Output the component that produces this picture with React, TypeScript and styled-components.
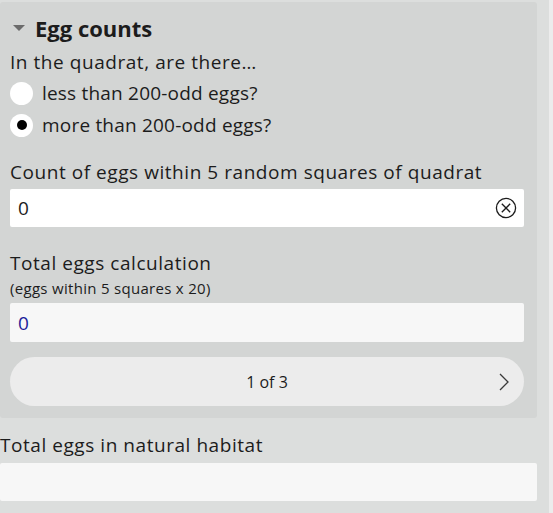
import React from "react";
import styled, { createGlobalStyle } from "styled-components";

const GlobalStyle = createGlobalStyle`
  html, body {
    margin: 0;
    padding: 0;
    background: #dcdedd;
  }
  body {
    font-family: "Open Sans", "Noto Sans", "Liberation Sans", sans-serif;
    color: #1c1c1c;
  }
`;

const Page = styled.div`
  position: relative;
  width: 553px;
  min-height: 513px;
  padding: 2px 16px 0 0;
  box-sizing: border-box;
  overflow: hidden;

  &::after {
    content: "";
    position: absolute;
    top: 0;
    right: 0;
    width: 4px;
    height: 100%;
    background: #ececec;
  }
`;

const Group = styled.section`
  background: #d3d5d4;
  border-radius: 3px;
  padding: 12px 13px 12px 10px;
`;

const Header = styled.div`
  display: flex;
  align-items: center;
  gap: 10px;
  height: 28px;
  padding-left: 3px;
  font-size: 22px;
  font-weight: 700;
`;

const Caret = styled.span`
  width: 0;
  height: 0;
  border-left: 6px solid transparent;
  border-right: 6px solid transparent;
  border-top: 6px solid #6b6b6b;
`;

const Label = styled.div<{ $top?: number }>`
  margin-top: ${({ $top }) => $top ?? 0}px;
  font-size: 19px;
  letter-spacing: 0.55px;
  line-height: 24px;
`;

const Hint = styled.div`
  margin-top: 4px;
  font-size: 15px;
  letter-spacing: 0.3px;
  line-height: 18px;
`;

const RadioList = styled.div`
  margin-top: 3px;
  display: flex;
  flex-direction: column;
`;

const RadioRow = styled.label`
  display: flex;
  align-items: center;
  gap: 9px;
  height: 32px;
  font-size: 19px;
  letter-spacing: 0.2px;
`;

const RadioCircle = styled.span<{ $checked?: boolean }>`
  width: 23px;
  height: 23px;
  border-radius: 50%;
  background: #fff;
  display: flex;
  align-items: center;
  justify-content: center;

  &::after {
    content: "";
    width: 10px;
    height: 10px;
    border-radius: 50%;
    background: #000;
    display: ${({ $checked }) => ($checked ? "block" : "none")};
  }
`;

const InputBox = styled.div<{ $readOnly?: boolean; $top?: number; $color?: string }>`
  margin-top: ${({ $top }) => $top ?? 5}px;
  height: 38px;
  border-radius: 2px;
  background: ${({ $readOnly }) => ($readOnly ? "#f7f7f7" : "#ffffff")};
  display: flex;
  align-items: center;
  justify-content: space-between;
  padding: 0 7px 0 8px;
  font-size: 19px;
  color: ${({ $color }) => $color ?? "#1c1c1c"};
`;

const ClearButton = styled.span`
  display: flex;
  width: 22px;
  height: 22px;
`;

const Pager = styled.div`
  margin-top: 15px;
  height: 49px;
  border-radius: 25px;
  background: #ececec;
  display: grid;
  grid-template-columns: 40px 1fr 40px;
  align-items: center;
  font-size: 16px;
`;

const PagerText = styled.span`
  text-align: center;
`;

const PagerArrow = styled.span`
  display: flex;
  justify-content: center;
`;

const OuterField = styled.div`
  margin-top: 15px;
`;

const OuterInput = styled(InputBox)`
  margin-top: 6px;
  height: 38px;
`;

const ClearIcon = () => (
  <svg width="22" height="22" viewBox="0 0 22 22" fill="none" stroke="#1c1c1c" strokeWidth="1.3">
    <circle cx="11" cy="11" r="9.6" />
    <path d="M6.8 6.8 L15.2 15.2 M15.2 6.8 L6.8 15.2" />
  </svg>
);

const Chevron = () => (
  <svg width="12" height="20" viewBox="0 0 12 20" fill="none" stroke="#3a3a3a" strokeWidth="1.3">
    <path d="M2 2 L10 10 L2 18" />
  </svg>
);

const App: React.FC = () => {
  return (
    <Page>
      <GlobalStyle />
      <Group>
        <Header>
          <Caret />
          <span>Egg counts</span>
        </Header>
        <Label $top={8}>In the quadrat, are there…</Label>
        <RadioList>
          <RadioRow>
            <RadioCircle />
            less than 200-odd eggs?
          </RadioRow>
          <RadioRow>
            <RadioCircle $checked />
            more than 200-odd eggs?
          </RadioRow>
        </RadioList>
        <Label $top={19}>Count of eggs within 5 random squares of quadrat</Label>
        <InputBox>
          <span>0</span>
          <ClearButton>
            <ClearIcon />
          </ClearButton>
        </InputBox>
        <Label $top={24}>Total eggs calculation</Label>
        <Hint>(eggs within 5 squares x 20)</Hint>
        <InputBox $readOnly $top={6} $color="#1d1d9a" style={{ height: 39 }}>
          <span>0</span>
        </InputBox>
        <Pager>
          <span />
          <PagerText>1 of 3</PagerText>
          <PagerArrow>
            <Chevron />
          </PagerArrow>
        </Pager>
      </Group>
      <OuterField>
        <Label>Total eggs in natural habitat</Label>
        <OuterInput $readOnly />
      </OuterField>
    </Page>
  );
};

export default App;
